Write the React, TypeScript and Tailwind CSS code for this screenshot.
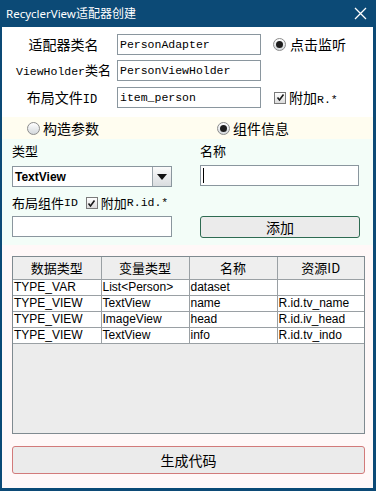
import React from "react";

const CJK = '"Noto Sans CJK SC", "Noto Sans", sans-serif';
const MONO = '"Liberation Mono", "Noto Sans CJK SC", monospace';
const SANS = '"Liberation Sans", "Noto Sans CJK SC", sans-serif';

function Radio({ checked }: { checked?: boolean }) {
  return (
    <span className="flex h-[13px] w-[13px] items-center justify-center rounded-full border border-[#8c8c8c] bg-gradient-to-b from-[#ffffff] to-[#d4d8dc]">
      {checked && <span className="h-[7px] w-[7px] rounded-full bg-[#1e1e1e]" />}
    </span>
  );
}

function Check() {
  return (
    <span className="flex h-[12px] w-[12px] items-center justify-center border border-[#7a7a7a] bg-gradient-to-b from-[#ffffff] to-[#dcdcdc]">
      <svg width="9" height="9" viewBox="0 0 9 9">
        <path d="M1.5 4.5 L3.5 7 L7.5 1.5" stroke="#1a1a1a" strokeWidth="1.6" fill="none" />
      </svg>
    </span>
  );
}

function Field({ value, w, caret }: { value?: string; w: string; caret?: boolean }) {
  return (
    <div
      className={`flex h-[21px] ${w} items-center border border-[#8a969e] bg-white pl-[2px] text-[11.5px] text-black`}
      style={{ fontFamily: MONO }}
    >
      {caret && <span className="h-[15px] w-[1px] bg-black" />}
      {value}
    </div>
  );
}

const rows = [
  ["TYPE_VAR", "List<Person>", "dataset", ""],
  ["TYPE_VIEW", "TextView", "name", "R.id.tv_name"],
  ["TYPE_VIEW", "ImageView", "head", "R.id.iv_head"],
  ["TYPE_VIEW", "TextView", "info", "R.id.tv_indo"],
];

export default function App() {
  return (
    <div className="flex h-[491px] w-[376px] flex-col bg-[#0c4a76]" style={{ fontFamily: CJK }}>
      {/* title bar */}
      <div className="flex h-[28px] items-center justify-between pl-[6px] pr-[9px] text-white">
        <span className="text-[12px]">
          <span className="text-[11.5px]" style={{ fontFamily: '"Noto Sans", sans-serif' }}>RecyclerView</span>
          适配器创建
        </span>
        <svg width="13" height="13" viewBox="0 0 13 13">
          <path d="M1 1 L12 12 M12 1 L1 12" stroke="#ffffff" strokeWidth="1.3" />
        </svg>
      </div>

      <div className="ml-[2px] mr-[3px] mb-[3px] flex flex-1 flex-col">
        {/* top section */}
        <div className="flex flex-col bg-white pl-[8px] pt-[7px] pb-[9px] text-black">
          <div className="flex h-[21px] items-center">
            <div className="w-[107px] text-center text-[14px]">适配器类名</div>
            <Field value="PersonAdapter" w="w-[144px]" />
            <div className="ml-[12px] flex items-center gap-[4px] text-[14px]">
              <Radio checked />
              <span>点击监听</span>
            </div>
          </div>
          <div className="mt-[5px] flex h-[21px] items-center">
            <div className="w-[107px] text-center text-[13px]">
              <span className="text-[11.5px]" style={{ fontFamily: MONO }}>ViewHolder</span>类名
            </div>
            <Field value="PersonViewHolder" w="w-[144px]" />
          </div>
          <div className="mt-[6px] flex h-[21px] items-center">
            <div className="w-[104px] text-center text-[14px]">
              布局文件<span className="text-[12px]" style={{ fontFamily: MONO }}>ID</span>
            </div>
            <div className="ml-[3px]">
              <Field value="item_person" w="w-[144px]" />
            </div>
            <div className="ml-[13px] flex items-center gap-[3px] text-[14px]">
              <Check />
              <span>
                附加<span className="text-[11.5px]" style={{ fontFamily: MONO }}>R.*</span>
              </span>
            </div>
          </div>
        </div>

        {/* radio row */}
        <div className="flex h-[22px] items-center bg-[#fffdf0] text-[14px] text-black">
          <div className="ml-[25px] flex items-center gap-[3px]">
            <Radio />
            <span>构造参数</span>
          </div>
          <div className="ml-[118px] flex items-center gap-[3px]">
            <Radio checked />
            <span>组件信息</span>
          </div>
        </div>

        {/* form section */}
        <div className="grid grid-cols-[160px_160px] gap-x-[28px] bg-[#f3fdf8] pl-[10px] pt-[4px] pb-[7px] text-black">
          <div className="flex h-[16px] items-center text-[13px]">类型</div>
          <div className="flex h-[16px] items-center text-[13px]">名称</div>

          <div className="mt-[7px] flex h-[21px] w-[160px] border border-[#8a969e] bg-white">
            <div className="flex flex-1 items-center pl-[2px] text-[12px] font-bold" style={{ fontFamily: SANS }}>
              TextView
            </div>
            <div className="flex w-[19px] items-center justify-center border-l border-[#9aa4aa] bg-gradient-to-b from-[#fbfbfb] to-[#d9dcdf]">
              <svg width="10" height="6" viewBox="0 0 10 6">
                <path d="M0 0 L10 0 L5 6 Z" fill="#111" />
              </svg>
            </div>
          </div>
          <div className="mt-[6px]">
            <Field w="w-[159px]" caret />
          </div>

          <div className="mt-[8px] flex h-[16px] items-center text-[13px]">
            布局组件<span className="text-[11.5px]" style={{ fontFamily: MONO }}>ID</span>
            <span className="ml-[8px] mr-[3px]">
              <Check />
            </span>
            附加<span className="text-[11.5px]" style={{ fontFamily: MONO }}>R.id.*</span>
          </div>
          <div />

          <div className="mt-[5px]">
            <Field w="w-[160px]" />
          </div>
          <div className="mt-[5px] flex h-[22px] w-[160px] items-center justify-center rounded-[3px] border border-[#2e6b52] bg-[#ebebeb] text-[14px]">
            添加
          </div>
        </div>

        {/* table + button section */}
        <div className="flex flex-1 flex-col bg-[#fff8f8] pl-[10px] pr-[8px] pt-[11px] pb-[14px]">
          <div className="flex h-[178px] flex-col border border-[#7f8a90] bg-[#ececec]">
            <table className="w-full table-fixed border-collapse text-black">
              <colgroup>
                <col className="w-[88px]" />
                <col className="w-[88px]" />
                <col className="w-[88px]" />
                <col />
              </colgroup>
              <thead>
                <tr className="h-[22px] bg-[#eeeeee] text-[13px]">
                  {["数据类型", "变量类型", "名称", "资源ID"].map((h, i) => (
                    <th
                      key={h}
                      className={`border-b border-[#9aa0a4] p-0 text-center font-normal ${i < 3 ? "border-r" : ""}`}
                      style={{ fontFamily: '"Noto Sans CJK SC", "Liberation Sans", sans-serif' }}
                    >
                      {h}
                    </th>
                  ))}
                </tr>
              </thead>
              <tbody>
                {rows.map((r, ri) => (
                  <tr key={ri} className="h-[16px] bg-white text-[12px] leading-[15px]" style={{ fontFamily: SANS }}>
                    {r.map((c, ci) => (
                      <td
                        key={ci}
                        className={`overflow-hidden whitespace-nowrap border-b border-[#9aa0a4] p-0 pl-[1px] ${ci < 3 ? "border-r" : ""}`}
                      >
                        {c}
                      </td>
                    ))}
                  </tr>
                ))}
              </tbody>
            </table>
          </div>
          <div className="mt-[12px] flex h-[28px] items-center justify-center rounded-[3px] border border-[#d27a7a] bg-[#ebebeb] text-[14px] text-black">
            生成代码
          </div>
        </div>
      </div>
    </div>
  );
}
